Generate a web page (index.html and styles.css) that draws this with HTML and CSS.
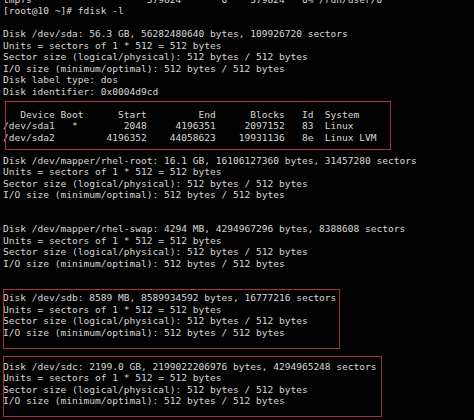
FILE: index.html
```html
<!DOCTYPE html>
<html>
<head>
<meta charset="utf-8">
<link rel="stylesheet" href="styles.css">
</head>
<body>
<div class="screen">
<pre class="term">tmpfs                    379824       0    379824   0% /run/user/0
[root@10 ~]# fdisk -l

Disk /dev/sda: 56.3 GB, 56282480640 bytes, 109926720 sectors
Units = sectors of 1 * 512 = 512 bytes
Sector size (logical/physical): 512 bytes / 512 bytes
I/O size (minimum/optimal): 512 bytes / 512 bytes
Disk label type: dos
Disk identifier: 0x0004d9cd

   Device Boot      Start         End      Blocks   Id  System
/dev/sda1   *        2048     4196351     2097152   83  Linux
/dev/sda2         4196352    44058623    19931136   8e  Linux LVM

Disk /dev/mapper/rhel-root: 16.1 GB, 16106127360 bytes, 31457280 sectors
Units = sectors of 1 * 512 = 512 bytes
Sector size (logical/physical): 512 bytes / 512 bytes
I/O size (minimum/optimal): 512 bytes / 512 bytes


Disk /dev/mapper/rhel-swap: 4294 MB, 4294967296 bytes, 8388608 sectors
Units = sectors of 1 * 512 = 512 bytes
Sector size (logical/physical): 512 bytes / 512 bytes
I/O size (minimum/optimal): 512 bytes / 512 bytes


Disk /dev/sdb: 8589 MB, 8589934592 bytes, 16777216 sectors
Units = sectors of 1 * 512 = 512 bytes
Sector size (logical/physical): 512 bytes / 512 bytes
I/O size (minimum/optimal): 512 bytes / 512 bytes


Disk /dev/sdc: 2199.0 GB, 2199022206976 bytes, 4294965248 sectors
Units = sectors of 1 * 512 = 512 bytes
Sector size (logical/physical): 512 bytes / 512 bytes
I/O size (minimum/optimal): 512 bytes / 512 bytes
</pre>
<div class="mark mark-table"></div>
<div class="mark mark-sdb"></div>
<div class="mark mark-sdc"></div>
</div>
</body>
</html>
```
FILE: styles.css
```css
html, body {
  margin: 0;
  padding: 0;
  background: #000;
}

.screen {
  position: relative;
  width: 474px;
  height: 420px;
  overflow: hidden;
  background: #020202;
}

.term {
  margin: -6px 0 0 0;
  padding: 0 0 0 3px;
  font-family: "DejaVu Sans Mono", monospace;
  font-size: 9.55px;
  line-height: 11.47px;
  color: #d6d6d6;
  white-space: pre;
}

.mark {
  position: absolute;
  border: 1.5px solid #a8303c;
  box-sizing: border-box;
}

.mark-table {
  left: 5px;
  top: 101px;
  width: 386px;
  height: 49px;
}

.mark-sdb {
  left: 3px;
  top: 289px;
  width: 337px;
  height: 60px;
}

.mark-sdc {
  left: 3px;
  top: 356px;
  width: 379px;
  height: 61px;
}
```
